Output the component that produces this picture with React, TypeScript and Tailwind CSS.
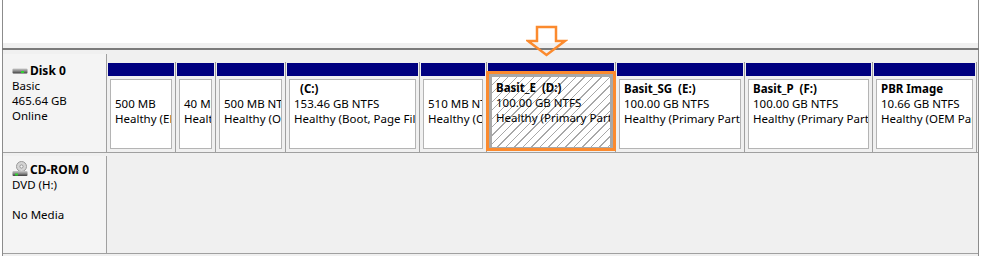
import React from 'react'

interface Part {
  w: number
  name: string
  size: string
  status: string
  selected?: boolean
}

const parts: Part[] = [
  { w: 69, name: '', size: '500 MB', status: 'Healthy (EFI System Partition)' },
  { w: 40, name: '', size: '40 MB', status: 'Healthy (OEM Partition)' },
  { w: 70, name: '', size: '500 MB NTFS', status: 'Healthy (OEM Partition)' },
  { w: 134, name: '  (C:)', size: '153.46 GB NTFS', status: 'Healthy (Boot, Page File, Crash Dump, Primary Partition)' },
  { w: 67, name: '', size: '510 MB NTFS', status: 'Healthy (OEM Partition)' },
  { w: 129, name: 'Basit_E  (D:)', size: '100.00 GB NTFS', status: 'Healthy (Primary Partition)', selected: true },
  { w: 129, name: 'Basit_SG  (E:)', size: '100.00 GB NTFS', status: 'Healthy (Primary Partition)' },
  { w: 128, name: 'Basit_P  (F:)', size: '100.00 GB NTFS', status: 'Healthy (Primary Partition)' },
  { w: 104, name: 'PBR Image', size: '10.66 GB NTFS', status: 'Healthy (OEM Partition)' },
]

function DiskIcon() {
  return (
    <svg width="16" height="8" viewBox="0 0 16 8" className="mr-[2px]">
      <defs>
        <linearGradient id="dk" x1="0" y1="0" x2="0" y2="1">
          <stop offset="0" stopColor="#c8c8c8" />
          <stop offset="0.5" stopColor="#8a8a8a" />
          <stop offset="1" stopColor="#3c3c3c" />
        </linearGradient>
      </defs>
      <rect x="0.5" y="1.5" width="15" height="5" rx="1" fill="url(#dk)" />
      <rect x="9" y="4" width="3" height="2" fill="#2fd12f" />
    </svg>
  )
}

function CdIcon() {
  return (
    <svg width="16" height="16" viewBox="0 0 16 16" className="mr-[2px]">
      <defs>
        <linearGradient id="cd" x1="0" y1="0" x2="0" y2="1">
          <stop offset="0" stopColor="#c8c8c8" />
          <stop offset="0.5" stopColor="#8a8a8a" />
          <stop offset="1" stopColor="#3c3c3c" />
        </linearGradient>
      </defs>
      <circle cx="9.5" cy="5.5" r="5" fill="#d4d4d4" stroke="#9a9a9a" />
      <circle cx="9.5" cy="5.5" r="1.6" fill="#f4f4f4" stroke="#8a8a8a" strokeWidth="0.8" />
      <rect x="0.5" y="10" width="15" height="5" rx="1" fill="url(#cd)" />
      <rect x="3" y="12.5" width="3" height="2" fill="#2fd12f" />
    </svg>
  )
}

function PartitionColumn({ p }: { p: Part }) {
  if (p.selected) {
    return (
      <div className="relative flex flex-col border-r border-[#a0a0a0]" style={{ width: p.w }}>
        <div className="mx-[1px] mt-[1px] h-[10px] bg-[#000080]" />
        <div className="flex-1 px-[1px] pb-[1px]">
          <div className="h-full overflow-hidden whitespace-pre border-[4px] border-[#a8a8a8] bg-white bg-[repeating-linear-gradient(135deg,transparent_0_5px,#a8a8a8_5px_6px)] pl-[4px] pt-[3px] leading-[15px]">
            <div className="font-bold">{p.name}</div>
            <div>{p.size}</div>
            <div>{p.status}</div>
          </div>
        </div>
        <div className="absolute -left-[1px] top-[9px] h-[80px] w-[130px] border-[3px] border-[#fb8a2e]" />
      </div>
    )
  }
  return (
    <div className="flex flex-col border-r border-[#a0a0a0]" style={{ width: p.w }}>
      <div className="mx-[1px] mt-[1px] h-[13px] bg-[#000080]" />
      <div className="flex-1 p-[3px]">
        <div className="h-full overflow-hidden whitespace-pre border border-[#b4b4b4] bg-white pl-[4px] pt-[1px] leading-[15px]">
          <div className="h-[15px] font-bold">{p.name}</div>
          <div>{p.size}</div>
          <div>{p.status}</div>
        </div>
      </div>
    </div>
  )
}

export default function App() {
  return (
    <div className="relative h-[256px] w-[983px] overflow-hidden bg-white font-['Noto_Sans',sans-serif] text-[11.5px] text-black">
      <div className="ml-[2px] h-[43px] w-[977px] border-x border-[#8c8c8c] bg-white" />
      <div className="ml-[2px] h-[5px] w-[977px] border-x border-[#8c8c8c] bg-[#f0f0f0]" />
      <div className="ml-[2px] h-[2px] w-[977px] bg-[#7a7a7a]" />

      <div className="ml-[2px] h-[206px] w-[977px] border-l border-r border-[#8c8c8c] bg-[#f0f0f0] pt-[4px]">
        {/* Disk 0 */}
        <div className="flex h-[99px]">
          <div className="w-[104px] border-r border-b border-[#a0a0a0] bg-[#f4f4f4] pl-[9px] pt-[9px] leading-[15px]">
            <div className="flex items-center">
              <DiskIcon />
              <span className="text-[12px] font-bold">Disk 0</span>
            </div>
            <div>Basic</div>
            <div>465.64 GB</div>
            <div>Online</div>
          </div>
          <div className="flex h-[91px] flex-1 self-end border-b border-[#a0a0a0]">
            {parts.map(p => (
              <PartitionColumn key={p.w + p.size + p.name} p={p} />
            ))}
          </div>
        </div>

        {/* CD-ROM 0 */}
        <div className="mt-[3px] flex h-[98px]">
          <div className="w-[104px] border-r border-b border-[#a0a0a0] bg-[#f4f4f4] pl-[9px] pt-[5px] leading-[15px]">
            <div className="flex items-end">
              <CdIcon />
              <span className="text-[12px] font-bold">CD-ROM 0</span>
            </div>
            <div>DVD (H:)</div>
            <div className="h-[15px]" />
            <div>No Media</div>
          </div>
          <div className="flex-1 border-b border-[#a0a0a0] bg-[#f0f0f0]" />
        </div>
      </div>

      <svg className="absolute left-[526px] top-[25px]" width="42" height="32" viewBox="0 0 42 32">
        <path d="M11 2 H30 V16 H39 L20.5 30 L2 16 H11 Z" fill="none" stroke="#fb8a2e" strokeWidth="2.5" strokeLinejoin="miter" />
      </svg>
    </div>
  )
}
